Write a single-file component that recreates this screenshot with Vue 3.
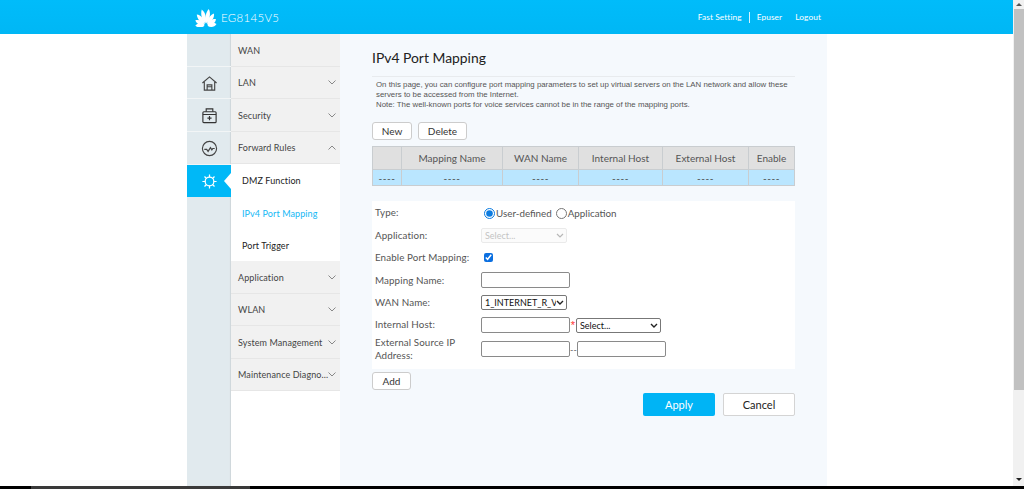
<script setup>
const railItems = ['blank', 'home', 'kit', 'pulse', 'gear', 'blank']
const menuTop = [
  { name: 'WAN' },
  { name: 'LAN', chev: 'down' },
  { name: 'Security', chev: 'down' },
  { name: 'Forward Rules', chev: 'up' },
]
const subs = [
  { name: 'DMZ Function' },
  { name: 'IPv4 Port Mapping', active: true },
  { name: 'Port Trigger' },
]
const menuBottom = [
  { name: 'Application', chev: 'down' },
  { name: 'WLAN', chev: 'down' },
  { name: 'System Management', chev: 'down' },
  { name: 'Maintenance Diagno...', chev: 'down' },
]
const columns = ['', 'Mapping Name', 'WAN Name', 'Internal Host', 'External Host', 'Enable']
const petals = [
  { a: -84, s: 0.82 }, { a: -60, s: 0.92 }, { a: -36, s: 1.12 }, { a: -12, s: 1.3 },
  { a: 12, s: 1.3 }, { a: 36, s: 1.12 }, { a: 60, s: 0.92 }, { a: 84, s: 0.82 },
]
</script>

<template>
  <div class="page">
    <div class="top">
      <div class="viewport">
        <header class="header">
          <div class="brand">
            <svg class="logo" viewBox="0 0 26 20" width="26" height="20">
              <g v-for="p in petals" :key="p.a" :transform="`translate(13 18.8) rotate(${p.a}) scale(1 ${p.s})`">
                <path d="M0 -1.800 C-2.900 -5 -3.100 -9.500 -0.800 -13 C2.300 -10.500 2.500 -5 0 -1.800Z" fill="#fff" />
              </g>
            </svg>
            <span class="model">EG8145V5</span>
          </div>
          <nav class="links">
            <span>Fast Setting</span>
            <i class="sep"></i>
            <span>Epuser</span>
            <span class="logout">Logout</span>
          </nav>
        </header>

        <div class="main">
          <aside class="rail">
            <div v-for="(it, i) in railItems" :key="i" class="rail-item" :class="{ on: it === 'gear', last: i === 5 }">
              <svg v-if="it === 'home'" viewBox="0 0 18 18" width="17" height="17" fill="none" stroke="#444" stroke-width="1.2">
                <path d="M1.5 8.5 9 2l7.500 6.500M3.500 7.500V16h11V7.500" />
                <path d="M6.500 16v-5.500h5V16M6.500 12.500h5" />
              </svg>
              <svg v-else-if="it === 'kit'" viewBox="0 0 18 18" width="17" height="17" fill="none" stroke="#333" stroke-width="1.2">
                <rect x="2" y="5" width="14" height="11.500" rx="1" />
                <path d="M5.500 5V2h7v3M2 8h14M9 9.500v4.500M6.800 11.800h4.400" />
              </svg>
              <svg v-else-if="it === 'pulse'" viewBox="0 0 18 18" width="17" height="17" fill="none" stroke="#444" stroke-width="1.2">
                <circle cx="9" cy="9" r="7.500" />
                <path d="M3.500 10h2.500l1.500 2 2.500-4 1.500 2.500 1-1.500h2" stroke-width="1.300" />
              </svg>
              <svg v-else-if="it === 'gear'" viewBox="0 0 18 18" width="17" height="17" fill="none" stroke="#fff" stroke-width="1.300">
                <circle cx="9" cy="9" r="4.600" />
                <path d="M9 1.500v3M9 13.500v3M1.500 9h3M13.500 9h3M3.700 3.700l2.100 2.100M12.200 12.200l2.100 2.100M14.300 3.700l-2.100 2.100M5.800 12.200l-2.100 2.100" />
              </svg>
              <i v-if="it === 'gear'" class="pointer"></i>
            </div>
          </aside>

          <nav class="menu">
            <div v-for="m in menuTop" :key="m.name" class="menu-row">
              <span>{{ m.name }}</span>
              <svg v-if="m.chev" class="chev" viewBox="0 0 8 5" width="8" height="5" fill="none" stroke="#888" stroke-width="1">
                <path :d="m.chev === 'up' ? 'M.5 4.500 4 1l3.500 3.500' : 'M.5.500 4 4 7.500.500'" />
              </svg>
            </div>
            <div v-for="s in subs" :key="s.name" class="sub-row" :class="{ active: s.active }">{{ s.name }}</div>
            <div v-for="m in menuBottom" :key="m.name" class="menu-row">
              <span>{{ m.name }}</span>
              <svg class="chev" viewBox="0 0 8 5" width="8" height="5" fill="none" stroke="#888" stroke-width="1">
                <path d="M.5.500 4 4 7.500.500" />
              </svg>
            </div>
          </nav>

          <main class="content">
            <h1 class="title">IPv4 Port Mapping</h1>
            <div class="notes">
              On this page, you can configure port mapping parameters to set up virtual servers on the LAN network and allow these servers to be accessed from the Internet.<br />
              Note: The well-known ports for voice services cannot be in the range of the mapping ports.
            </div>

            <div class="actions">
              <button class="btn new">New</button>
              <button class="btn del">Delete</button>
            </div>

            <table class="grid">
              <colgroup>
                <col style="width: 29px" /><col style="width: 101px" /><col style="width: 76px" />
                <col style="width: 84px" /><col style="width: 86px" /><col style="width: 46px" />
              </colgroup>
              <thead>
                <tr><th v-for="(c, i) in columns" :key="i">{{ c }}</th></tr>
              </thead>
              <tbody>
                <tr><td v-for="(c, i) in columns" :key="i">----</td></tr>
              </tbody>
            </table>

            <form class="form" @submit.prevent>
              <div class="row">
                <label class="lab">Type:</label>
                <div class="ctl">
                  <label class="opt"><input type="radio" name="type" checked />User-defined</label>
                  <label class="opt"><input type="radio" name="type" />Application</label>
                </div>
              </div>
              <div class="row">
                <label class="lab">Application:</label>
                <div class="ctl"><select class="sel app" disabled><option>Select...</option></select></div>
              </div>
              <div class="row">
                <label class="lab">Enable Port Mapping:</label>
                <div class="ctl"><input class="chk" type="checkbox" checked /></div>
              </div>
              <div class="row">
                <label class="lab">Mapping Name:</label>
                <div class="ctl"><input class="txt" type="text" /></div>
              </div>
              <div class="row">
                <label class="lab">WAN Name:</label>
                <div class="ctl"><select class="sel wan"><option>1_INTERNET_R_VID_</option></select></div>
              </div>
              <div class="row">
                <label class="lab">Internal Host:</label>
                <div class="ctl">
                  <input class="txt" type="text" /><span class="req">*</span>
                  <select class="sel host"><option>Select...</option></select>
                </div>
              </div>
              <div class="row tall">
                <label class="lab">External Source IP Address:</label>
                <div class="ctl">
                  <input class="txt" type="text" /><span class="dash">--</span><input class="txt" type="text" />
                </div>
              </div>
            </form>

            <button class="btn add">Add</button>

            <div class="footer-btns">
              <button class="big apply">Apply</button>
              <button class="big cancel">Cancel</button>
            </div>
          </main>
        </div>
      </div>

      <div class="scrollbar">
        <span class="arrow up"></span>
        <div class="thumb"></div>
        <span class="arrow down"></span>
      </div>
    </div>
    <div class="taskbar"><div class="task"></div></div>
  </div>
</template>

<style>
html, body { margin: 0; padding: 0; overflow: hidden; background: #fff; }
</style>

<style scoped>
.page {
  width: 1024px;
  height: 489px;
  display: flex;
  flex-direction: column;
  overflow: hidden;
  font-family: Lato, "Noto Sans", sans-serif;
  color: #444;
}
.top { flex: 1; display: flex; min-height: 0; }
.viewport { flex: 1; display: flex; flex-direction: column; min-width: 0; }
.taskbar { height: 3px; background: #000; padding-left: 31px; }
.task { width: 219px; height: 3px; background: #3a3a3a; }

.scrollbar {
  width: 11px;
  background: #f1f1f1;
  display: flex;
  flex-direction: column;
  align-items: center;
  padding: 3px 0 5px;
  box-sizing: border-box;
}
.thumb { width: 10px; height: 381px; background: #c1c1c1; margin-top: 3px; }
.arrow { width: 0; height: 0; border-left: 3px solid transparent; border-right: 3px solid transparent; }
.arrow.up { border-bottom: 3px solid #555; }
.arrow.down { border-top: 3px solid #222; margin-top: auto; }

.header {
  height: 34px;
  flex: none;
  background: linear-gradient(#00bcfa, #00b7f5);
  color: #fff;
  display: flex;
  align-items: center;
  justify-content: space-between;
}
.brand { display: flex; align-items: center; margin-left: 193px; }
.logo { display: block; }
.model { font-size: 11.500px; margin-left: 2px; letter-spacing: 0.3px; font-weight: 300; }
.links { display: flex; align-items: center; font-size: 8.300px; margin-right: 192px; letter-spacing: 0.1px; }
.sep { width: 1px; height: 11px; background: #d5f3fd; margin: 0 7px; }
.logout { margin-left: 13px; }

.main { flex: 1; display: flex; margin-left: 187px; width: 640px; min-height: 0; }

.rail {
  width: 44px;
  flex: none;
  background: #e1eaee;
  box-shadow: inset -1px 0 1px #cfd6da;
  display: flex;
  flex-direction: column;
}
.rail-item {
  height: 32.7px;
  flex: none;
  box-sizing: border-box;
  padding-top: 1px;
  border-bottom: 1px solid #f2f5f6;
  display: flex;
  align-items: center;
  justify-content: center;
  position: relative;
}
.rail-item.last { border: 0; }
.rail-item.on { background: #00b8f7; border-bottom-color: #00b8f7; }
.pointer {
  position: absolute;
  right: 0;
  top: 8px;
  width: 0;
  height: 0;
  border-top: 8px solid transparent;
  border-bottom: 8px solid transparent;
  border-right: 7px solid #fff;
}

.menu { width: 109px; flex: none; background: #fff; font-size: 9px; letter-spacing: 0.1px; }
.menu-row {
  height: 32.5px;
  box-sizing: border-box;
  padding: 1px 4px 0 7px;
  background: #f1f1f1;
  border-bottom: 1px solid #e6e6e6;
  display: flex;
  align-items: center;
  justify-content: space-between;
  white-space: nowrap;
}
.chev { flex: none; }
.sub-row {
  height: 32.4px;
  box-sizing: border-box;
  padding: 1px 0 0 11px;
  display: flex;
  align-items: center;
  color: #222;
}
.sub-row.active { color: #13b8f5; }

.content {
  width: 487px;
  flex: none;
  box-sizing: border-box;
  background: #f5f9fd;
  padding: 0 32px;
  display: flex;
  flex-direction: column;
}
.title {
  margin: 0;
  height: 43px;
  box-sizing: border-box;
  padding-top: 14px;
  font-size: 13.900px;
  line-height: 20px;
  font-weight: 400;
  color: #222;
  border-bottom: 1px solid #e8ebee;
}
.notes {
  font-family: "Liberation Sans", Arial, sans-serif;
  font-size: 7.850px;
  line-height: 9.800px;
  color: #555;
  padding: 3px 4px 0;
  height: 29px;
  margin-bottom: 13px;
}
.actions { display: flex; gap: 6px; }
.btn {
  box-sizing: border-box;
  height: 18px;
  padding: 0;
  background: #fff;
  border: 1px solid #ccc;
  border-radius: 3px;
  font: 10px Lato, sans-serif;
  color: #333;
}
.new { width: 40px; }
.del { width: 49px; }
.add { width: 39px; margin-top: 3px; }

.grid {
  margin-top: 6px;
  width: 423px;
  table-layout: fixed;
  border-collapse: collapse;
  font-size: 10px;
  color: #555;
}
.grid th, .grid td {
  border: 1px solid #c9cdd0;
  padding: 0;
  text-align: center;
  font-weight: 400;
  white-space: nowrap;
}
.grid th { height: 22px; background: #e0e0e0; }
.grid td { height: 15px; background: #bae6ff; line-height: 12px; color: #444; letter-spacing: 0.5px; }

.form {
  margin-top: 15px;
  background: #fff;
  height: 168px;
  box-sizing: border-box;
  padding: 1px 0 0 3px;
  font-size: 9.800px;
  letter-spacing: 0.1px;
  color: #555;
  display: flex;
  flex-direction: column;
}
.row { display: flex; align-items: center; height: 22.4px; flex: none; }
.row.tall { height: 26px; }
.lab { width: 106px; flex: none; line-height: 13.500px; }
.tall .lab { width: 90px; margin-right: 16px; }
.ctl { display: flex; align-items: center; }
.opt { display: flex; align-items: center; margin-right: 1px; letter-spacing: 0; }
.opt input { margin: 0 1px 0 3px; width: 11px; height: 11px; accent-color: #0b7be0; }
.chk { margin: 0 0 0 3px; width: 9px; height: 9px; accent-color: #0b6fe0; }
.txt {
  box-sizing: border-box;
  width: 89px;
  height: 16px;
  padding: 0 2px;
  background: #fff;
  border: 1px solid #8a8a8a;
  border-radius: 2px;
}
.sel {
  box-sizing: border-box;
  height: 15px;
  padding: 0 10px 0 3px;
  font: 9px Lato, sans-serif;
  color: #111;
  appearance: none;
  background: #fff url("data:image/svg+xml,%3Csvg xmlns='http://www.w3.org/2000/svg' width='8' height='5'%3E%3Cpath d='M1 1l3 3 3-3' fill='none' stroke='%23222' stroke-width='1.400'/%3E%3C/svg%3E") no-repeat right 2px center;
  border: 1px solid #777;
  border-radius: 2px;
}
.sel.app {
  width: 86px;
  border-color: #e2e2e2;
  color: #aaa;
  background-color: #fafafa;
  background-image: url("data:image/svg+xml,%3Csvg xmlns='http://www.w3.org/2000/svg' width='8' height='5'%3E%3Cpath d='M1 1l3 3 3-3' fill='none' stroke='%23999' stroke-width='1.200'/%3E%3C/svg%3E");
}
.sel.wan { width: 86px; }
.sel.host { width: 85px; }
.req { width: 6px; color: #f33; font: 11px/8px "Liberation Sans", sans-serif; text-align: center; height: 8px; }
.dash { width: 7px; text-align: center; color: #666; font-size: 9px; }

.footer-btns { display: flex; justify-content: flex-end; gap: 8px; margin-top: 3px; }
.big {
  box-sizing: border-box;
  width: 72px;
  height: 23px;
  padding: 0;
  border-radius: 2px;
  font: 11px Lato, sans-serif;
}
.apply { background: #00b4f5; color: #fff; border: 0; }
.cancel { background: #fff; color: #222; border: 1px solid #d4d4d4; }
</style>
